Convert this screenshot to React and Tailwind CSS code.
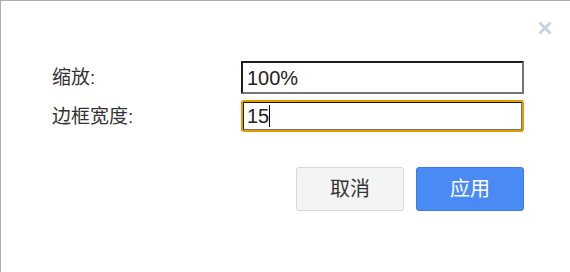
import React from "react";

export default function App() {
  return (
    <div
      className="relative w-[570px] h-[272px] bg-white border-t border-l border-[#adadad] text-[#333]"
      style={{ fontFamily: '"Liberation Sans", "Noto Sans CJK SC", sans-serif' }}
    >
      <button className="absolute left-[537px] top-[20px] w-[14px] h-[14px] flex items-center justify-center">
        <svg width="14" height="14" viewBox="0 0 14 14">
          <path d="M1.5 1.5 L12.5 12.5 M12.5 1.5 L1.5 12.5" stroke="#c5d2e1" strokeWidth="2.8" strokeLinecap="butt" />
        </svg>
      </button>

      <div className="pt-[60px] pl-[51px] pr-[46px]">
        <div className="flex items-center h-[33px]">
          <div className="w-[189px] text-[19px] leading-none">缩放:</div>
          <div className="flex-1 h-[33px] border-2 border-t-[#1e1e1e] border-l-[#1e1e1e] border-b-[#747474] border-r-[#747474] flex items-center pl-[4px] text-[20px] leading-none text-[#222]">
            100%
          </div>
        </div>
        <div className="flex items-center h-[32px] mt-[6px]">
          <div className="w-[189px] text-[19px] leading-none">边框宽度:</div>
          <div className="flex-1 h-[32px] border-2 border-[#e59a00] rounded-[3px]">
            <div className="h-full border border-t-[#1e1e1e] border-l-[#1e1e1e] border-b-[#747474] border-r-[#747474] flex items-center pl-[3px] text-[20px] leading-none text-[#222]">
              <span>15</span>
              <span className="inline-block w-px h-[22px] bg-black" />
            </div>
          </div>
        </div>

        <div className="flex justify-end gap-[12px] mt-[35px]">
          <button className="w-[108px] h-[44px] rounded-[3px] bg-[#f4f4f4] border border-[#d8d8d8] text-[20px] text-[#333]">
            取消
          </button>
          <button className="w-[108px] h-[44px] rounded-[3px] bg-[#4a8af4] border border-[#3a7be6] text-[20px] text-white">
            应用
          </button>
        </div>
      </div>
    </div>
  );
}
